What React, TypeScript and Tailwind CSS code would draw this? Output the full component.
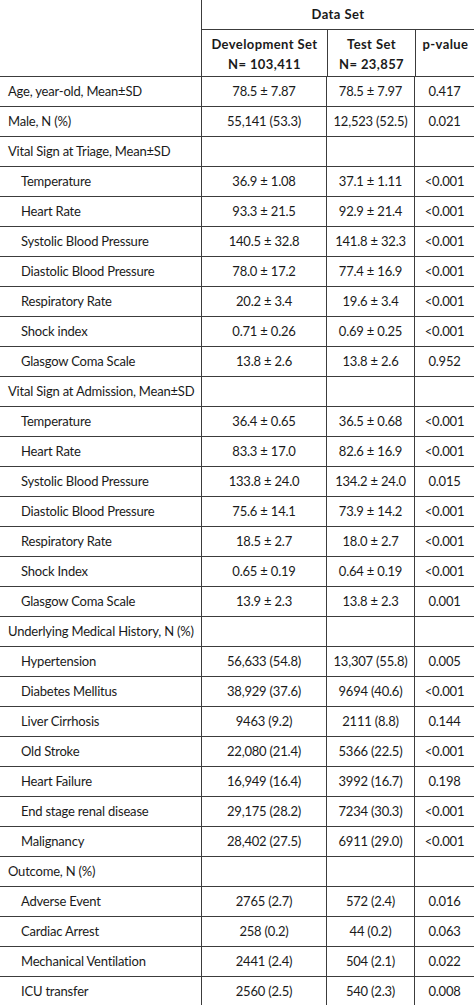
import React from "react";

type Row = { label: string; indent?: boolean; a?: string; b?: string; p?: string };

const rows: Row[] = [
  { label: "Age, year-old, Mean±SD", a: "78.5 ± 7.87", b: "78.5 ± 7.97", p: "0.417" },
  { label: "Male, N (%)", a: "55,141 (53.3)", b: "12,523 (52.5)", p: "0.021" },
  { label: "Vital Sign at Triage, Mean±SD" },
  { label: "Temperature", indent: true, a: "36.9 ± 1.08", b: "37.1 ± 1.11", p: "<0.001" },
  { label: "Heart Rate", indent: true, a: "93.3 ± 21.5", b: "92.9 ± 21.4", p: "<0.001" },
  { label: "Systolic Blood Pressure", indent: true, a: "140.5 ± 32.8", b: "141.8 ± 32.3", p: "<0.001" },
  { label: "Diastolic Blood Pressure", indent: true, a: "78.0 ± 17.2", b: "77.4 ± 16.9", p: "<0.001" },
  { label: "Respiratory Rate", indent: true, a: "20.2 ± 3.4", b: "19.6 ± 3.4", p: "<0.001" },
  { label: "Shock index", indent: true, a: "0.71 ± 0.26", b: "0.69 ± 0.25", p: "<0.001" },
  { label: "Glasgow Coma Scale", indent: true, a: "13.8 ± 2.6", b: "13.8 ± 2.6", p: "0.952" },
  { label: "Vital Sign at Admission, Mean±SD" },
  { label: "Temperature", indent: true, a: "36.4 ± 0.65", b: "36.5 ± 0.68", p: "<0.001" },
  { label: "Heart Rate", indent: true, a: "83.3 ± 17.0", b: "82.6 ± 16.9", p: "<0.001" },
  { label: "Systolic Blood Pressure", indent: true, a: "133.8 ± 24.0", b: "134.2 ± 24.0", p: "0.015" },
  { label: "Diastolic Blood Pressure", indent: true, a: "75.6 ± 14.1", b: "73.9 ± 14.2", p: "<0.001" },
  { label: "Respiratory Rate", indent: true, a: "18.5 ± 2.7", b: "18.0 ± 2.7", p: "<0.001" },
  { label: "Shock Index", indent: true, a: "0.65 ± 0.19", b: "0.64 ± 0.19", p: "<0.001" },
  { label: "Glasgow Coma Scale", indent: true, a: "13.9 ± 2.3", b: "13.8 ± 2.3", p: "0.001" },
  { label: "Underlying Medical History, N (%)" },
  { label: "Hypertension", indent: true, a: "56,633 (54.8)", b: "13,307 (55.8)", p: "0.005" },
  { label: "Diabetes Mellitus", indent: true, a: "38,929 (37.6)", b: "9694 (40.6)", p: "<0.001" },
  { label: "Liver Cirrhosis", indent: true, a: "9463 (9.2)", b: "2111 (8.8)", p: "0.144" },
  { label: "Old Stroke", indent: true, a: "22,080 (21.4)", b: "5366 (22.5)", p: "<0.001" },
  { label: "Heart Failure", indent: true, a: "16,949 (16.4)", b: "3992 (16.7)", p: "0.198" },
  { label: "End stage renal disease", indent: true, a: "29,175 (28.2)", b: "7234 (30.3)", p: "<0.001" },
  { label: "Malignancy", indent: true, a: "28,402 (27.5)", b: "6911 (29.0)", p: "<0.001" },
  { label: "Outcome, N (%)" },
  { label: "Adverse Event", indent: true, a: "2765 (2.7)", b: "572 (2.4)", p: "0.016" },
  { label: "Cardiac Arrest", indent: true, a: "258 (0.2)", b: "44 (0.2)", p: "0.063" },
  { label: "Mechanical Ventilation", indent: true, a: "2441 (2.4)", b: "504 (2.1)", p: "0.022" },
  { label: "ICU transfer", indent: true, a: "2560 (2.5)", b: "540 (2.3)", p: "0.008" },
];

export default function App() {
  return (
    <div
      className="w-[474px] h-[1005px] overflow-hidden bg-white text-[#1a1a1a] text-[13px] leading-none"
      style={{ fontFamily: "Lato, 'Open Sans', sans-serif" }}
    >
      {/* Header */}
      <div className="grid grid-cols-[201px_273px] h-[77px] border-b border-[#3c3c3c]">
        <div />
        <div className="border-l border-[#3c3c3c] flex flex-col">
          <div className="h-[30px] border-b border-[#3c3c3c] flex items-center justify-center font-bold tracking-[0.4px]">
            Data Set
          </div>
          <div className="grid grid-cols-[125px_88px_60px] flex-1 font-bold tracking-[0.4px]">
            <div className="flex flex-col items-center pt-[8px] gap-[7px]">
              <span>Development Set</span>
              <span>N= 103,411</span>
            </div>
            <div className="border-l border-[#3c3c3c] flex flex-col items-center pt-[8px] gap-[7px]">
              <span>Test Set</span>
              <span>N= 23,857</span>
            </div>
            <div className="border-l border-[#3c3c3c] flex flex-col items-center pt-[8px]">
              <span>p-value</span>
            </div>
          </div>
        </div>
      </div>
      {rows.map((r, i) => (
        <div
          key={i}
          className="grid grid-cols-[201px_125px_88px_60px] h-[30px] border-b border-[#3c3c3c] tracking-[-0.2px]"
        >
          <div className={`flex items-center whitespace-nowrap ${r.indent ? "pl-[21px]" : "pl-[8px]"}`}>{r.label}</div>
          <div className="border-l border-[#3c3c3c] flex items-center justify-center">{r.a ?? ""}</div>
          <div className="border-l border-[#3c3c3c] flex items-center justify-center">{r.b ?? ""}</div>
          <div className="border-l border-[#3c3c3c] flex items-center justify-center">{r.p ?? ""}</div>
        </div>
      ))}
    </div>
  );
}
